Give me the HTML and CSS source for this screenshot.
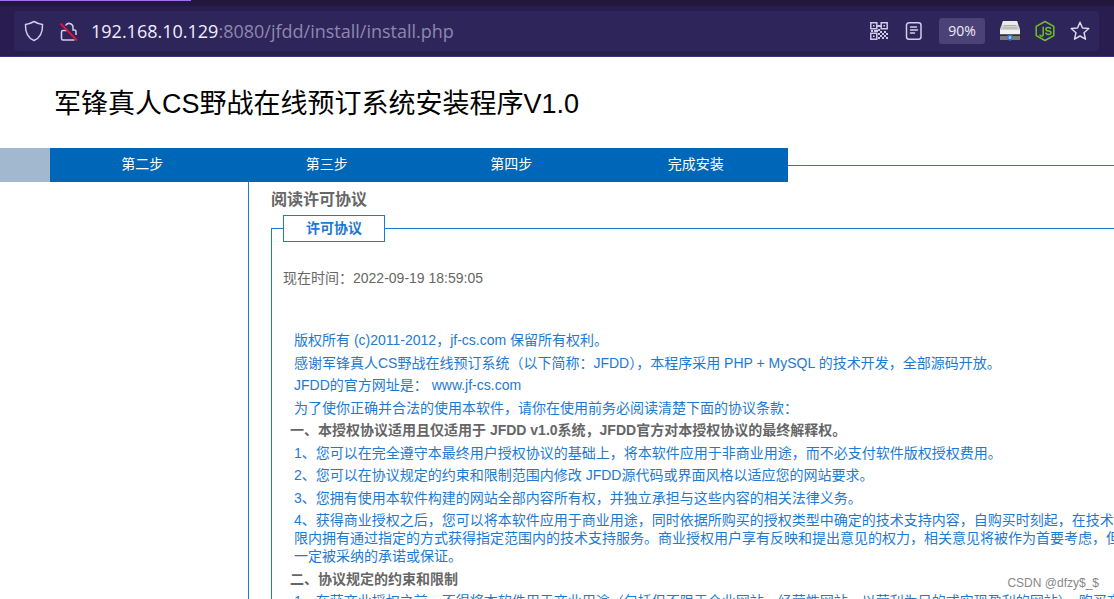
FILE: index.html
```
<!DOCTYPE html>
<html lang="zh-CN">
<head>
    <meta charset="UTF-8">
    <meta name="viewport" content="width=device-width, initial-scale=1.0">
    <title>军锋真人CS野战在线预订系统安装程序V1.0</title>
    <link rel="stylesheet" href="styles.css">
</head>
<body>
    <div class="tab-strip"><div class="active-tab"></div></div>
    <nav class="toolbar">
        <div class="url-bar">
            <button class="icon" aria-label="Tracking protection">
                <svg width="20" height="22" viewBox="0 0 20 22" fill="none" stroke="#d3cdea" stroke-width="1.5" stroke-linejoin="round"><path d="M10 1.500C7 3.200 4.500 4.200 1.500 4.600C1.200 11.500 3 17.500 10 20.500C17 17.500 18.800 11.500 18.500 4.600C15.500 4.200 13 3.200 10 1.500Z"/></svg>
            </button>
            <button class="icon lock" aria-label="Connection not secure">
                <svg width="20" height="22" viewBox="0 0 20 22" fill="none" stroke="#d3cdea" stroke-width="1.5"><path d="M6.500 5.500a4 4 0 0 1 7.500 1.500v3h1.500a1.500 1.500 0 0 1 1.500 1.500v3.500M8 10.500H4a1.500 1.500 0 0 0-1.500 1.500v6.500A1.500 1.500 0 0 0 4 20h11.500"/><path d="M1.500 3.500L18 20.500" stroke="#e2143c" stroke-width="1.800"/></svg>
            </button>
            <div class="address"><span class="host">192.168.10.129</span>:8080/jfdd/install/install.php</div>
            <div class="actions">
                <button class="icon" aria-label="QR code">
                    <svg width="20" height="18" viewBox="0 0 18 18" fill="none" stroke="#cfc9e6" stroke-width="1.5"><path d="M.8.8h6v6h-6zM11.200.8h6v6h-6zM.8 11.200h6v6h-6z"/><path d="M3 3h1.600v1.600H3zM13.400 3H15v1.600h-1.600zM3 13.400h1.600V15H3z" fill="#cfc9e6" stroke="none"/><path d="M7 4h4M8 8h2M1 9h2M4 9h4M10 10h2M14 10h2M8 12h2M12 12h2M16 12h2M10 14h2M14 14h2M8 16h2M12 16h2M16 16h2" stroke-width="2"/></svg>
                </button>
                <button class="icon" aria-label="Reader view">
                    <svg width="20" height="20" viewBox="0 0 18 20" fill="none" stroke="#d3cdea" stroke-width="1.5" stroke-linecap="round"><rect x="1.500" y="1.800" width="14.500" height="16.500" rx="2.500"/><path d="M5.500 6h6M5.500 9h7M5.500 12h4"/></svg>
                </button>
                <button class="zoom">90%</button>
                <button class="icon" aria-label="Network drive">
                    <svg width="20" height="20" viewBox="0 0 20 20"><path d="M3 0h14l3 8v5H0V8z" fill="#d0d0d0"/><path d="M3 0h14l1 4H2z" fill="#ebebeb"/><path d="M0 9h20v4H0z" fill="#f2f2f2"/><path d="M4 4.500h12M3 7h14" stroke="#a9a9a9"/><path d="M0 13.500h20" stroke="#5e5e60"/><path d="M0 15h20v4H0z" fill="#777a75"/><path d="M7.500 14h5v4.500L10 20l-2.500-1.500z" fill="#2d73d8"/><circle cx="10" cy="16.500" r="1.500" fill="#8fc6ff"/></svg>
                </button>
                <button class="icon" aria-label="Node">
                    <svg width="20" height="22" viewBox="0 0 20 22" fill="none" stroke="#6cc224" stroke-width="1.500" stroke-linejoin="round"><path d="M10 1.500l8.800 4.800v9.400L10 20.500l-8.800-4.800V6.300z"/><path d="M8.200 6.800v7.500q0 1.900-1.600 1.900-1.700 0-1.700-1.700M15.800 8.900q-.4-1.300-2.400-1.300-2.500 0-2.500 1.600 0 1.500 2.600 1.700 2.500.3 2.500 1.800 0 1.700-2.500 1.700-2.600 0-2.800-1.700"/></svg>
                </button>
                <button class="icon" aria-label="Bookmark">
                    <svg width="20" height="20" viewBox="0 0 20 20" fill="none" stroke="#d9d4ee" stroke-width="1.5" stroke-linejoin="round"><path d="M10 1.200l2.500 5.800 6.300.5-4.800 4.200 1.500 6.500L10 15l-5.500 3.200L6 11.700 1.200 7.500l6.300-.5z"/></svg>
                </button>
            </div>
        </div>
    </nav>

    <main class="page">
        <h1>军锋真人CS野战在线预订系统安装程序V1.0</h1>
        <div class="steps">
            <div class="done"></div>
            <ol>
                <li>第二步</li>
                <li>第三步</li>
                <li>第四步</li>
                <li>完成安装</li>
            </ol>
            <div class="line"></div>
        </div>
        <div class="content">
            <h2>阅读许可协议</h2>
            <fieldset>
                <legend>许可协议</legend>
                <p class="time">现在时间：2022-09-19 18:59:05</p>
                <ul class="terms">
                    <li>版权所有 (c)2011-2012，jf-cs.com 保留所有权利。</li>
                    <li>感谢军锋真人CS野战在线预订系统（以下简称：JFDD），本程序采用 PHP + MySQL 的技术开发，全部源码开放。</li>
                    <li>JFDD的官方网址是： <a href="#">www.jf-cs.com</a></li>
                    <li>为了使你正确并合法的使用本软件，请你在使用前务必阅读清楚下面的协议条款：</li>
                    <li class="title">一、本授权协议适用且仅适用于 JFDD v1.0系统，JFDD官方对本授权协议的最终解释权。</li>
                    <li>1、您可以在完全遵守本最终用户授权协议的基础上，将本软件应用于非商业用途，而不必支付软件版权授权费用。</li>
                    <li>2、您可以在协议规定的约束和限制范围内修改 JFDD源代码或界面风格以适应您的网站要求。</li>
                    <li>3、您拥有使用本软件构建的网站全部内容所有权，并独立承担与这些内容的相关法律义务。</li>
                    <li>4、获得商业授权之后，您可以将本软件应用于商业用途，同时依据所购买的授权类型中确定的技术支持内容，自购买时刻起，在技术支持<br>限内拥有通过指定的方式获得指定范围内的技术支持服务。商业授权用户享有反映和提出意见的权力，相关意见将被作为首要考虑，但没有<br>一定被采纳的承诺或保证。</li>
                    <li class="title">二、协议规定的约束和限制</li>
                    <li>1、在获商业授权之前，不得将本软件用于商业用途（包括但不限于企业网站、经营性网站、以营利为目的或实现盈利的网站）。购买商业</li>
                </ul>
            </fieldset>
        </div>
    </main>
    <div class="watermark">CSDN @dfzy$_$</div>
</body>
</html>
```
FILE: styles.css
```
* {
    box-sizing: border-box;
}
body {
    margin: 0;
    height: 100vh;
    display: flex;
    flex-direction: column;
    overflow: hidden;
    background-color: #fff;
    font-family: "Liberation Sans", "Noto Sans CJK SC", sans-serif;
    font-size: 14px;
    color: #666;
}
h1, h2, p, ul, ol {
    margin: 0;
    padding: 0;
}
ul, ol {
    list-style: none;
}
.tab-strip {
    flex: none;
    height: 6px;
    background-color: #22183e;
}
.active-tab {
    width: 191px;
    height: 1px;
    background-color: #a66cf5;
}
.toolbar {
    flex: none;
    height: 51px;
    padding: 5px 15px 5px 14px;
    background-color: #291d4f;
    border-bottom: 1px solid #40307a;
}
.url-bar {
    display: flex;
    align-items: center;
    height: 40px;
    padding: 0 9px 0 10px;
    border-radius: 4px;
    background-color: #2e255b;
}
button {
    padding: 0;
    border: none;
    background: none;
    cursor: pointer;
}
.icon svg {
    display: block;
}
.lock {
    margin-left: 15px;
}
.address {
    flex: 1;
    margin-left: 12px;
    font-family: "Open Sans", sans-serif;
    font-size: 18px;
    color: #8e87ad;
}
.host {
    color: #f1eefb;
}
.actions {
    display: flex;
    align-items: center;
    gap: 15px;
}
.zoom {
    width: 46px;
    height: 26px;
    padding-bottom: 2px;
    border-radius: 3px;
    background-color: #4b4275;
    font-family: "Open Sans", sans-serif;
    font-size: 14px;
    color: #efecfa;
}
.page {
    flex: 1;
    display: flex;
    flex-direction: column;
    min-height: 0;
}
h1 {
    padding: 27px 0 24px 54px;
    font-size: 27px;
    font-weight: normal;
    line-height: 40px;
    color: #000;
}
.steps {
    flex: none;
    display: flex;
    align-items: center;
    height: 34px;
    color: #fff;
}
.done {
    width: 50px;
    height: 34px;
    background-color: #a2b8ce;
}
.steps ol {
    display: grid;
    grid-template-columns: repeat(4, 1fr);
    width: 738px;
    padding-bottom: 2px;
    background-color: #0066b7;
    line-height: 32px;
    text-align: center;
}
.line {
    flex: 1;
    height: 1px;
    background-color: #1e7ad1;
}
.content {
    flex: 1;
    min-height: 0;
    margin-left: 248px;
    padding: 6px 0 0 22px;
    border-left: 1px solid #1e7ad1;
    overflow: hidden;
    white-space: nowrap;
}
h2 {
    font-size: 16px;
    line-height: 24px;
}
fieldset {
    min-width: 0;
    margin: 3px 0 0;
    padding: 0 0 0 11px;
    border: 1px solid #1e7ad1;
    border-right: none;
}
legend {
    width: 102px;
    margin: 0 auto 0 0;
    padding: 0;
    border: 1px solid #1e7ad1;
    font-weight: bold;
    line-height: 25px;
    text-align: center;
    color: #1e7ad1;
}
.time {
    padding-top: 27px;
    line-height: 18px;
}
.terms {
    padding: 44px 0 0 11px;
    line-height: 18px;
    color: #1e7ad1;
}
.terms li {
    margin-bottom: 4px;
}
.terms li:nth-child(odd) {
    margin-bottom: 5px;
}
.terms .title {
    margin-left: -4px;
    font-weight: bold;
    color: #666;
}
a {
    color: inherit;
    text-decoration: none;
}
.watermark {
    position: absolute;
    right: 15px;
    bottom: 7px;
    font-size: 12px;
    line-height: 18px;
    color: #888;
}
```
